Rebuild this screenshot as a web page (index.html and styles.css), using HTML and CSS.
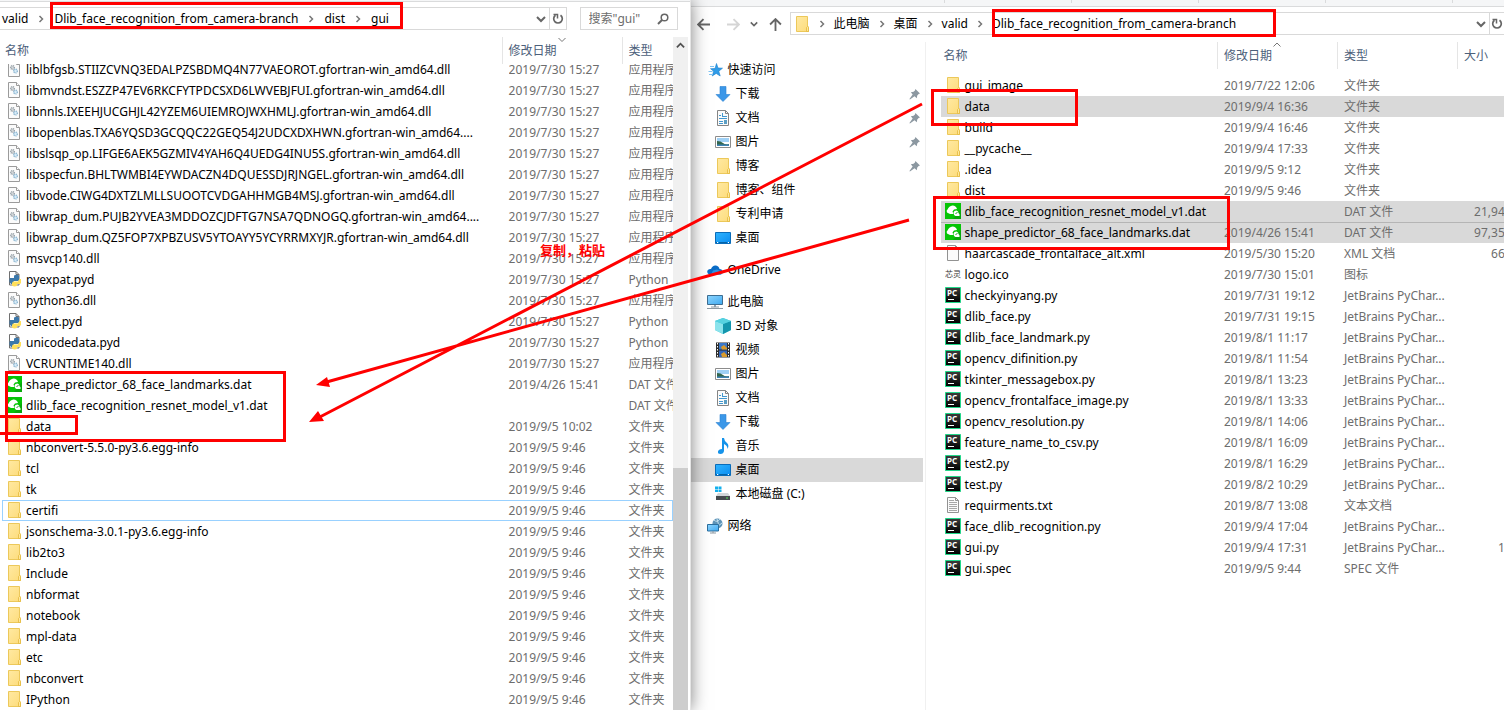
FILE: index.html
```html
<!DOCTYPE html>
<html lang="zh-CN">

<head>
  <meta charset="UTF-8">
  <meta name="viewport" content="width=device-width, initial-scale=1.0">
  <title>gui</title>
  <link rel="stylesheet" href="styles.css">
</head>

<body>
  <!-- icon sprite -->
  <svg class="sprite" aria-hidden="true">
    <defs>
      <linearGradient id="gFolder" x1="0" y1="0" x2="1" y2="1"><stop offset="0" stop-color="#ffe9a2"/><stop offset="1" stop-color="#fddc7b"/></linearGradient>
      <linearGradient id="gBlue" x1="0" y1="0" x2="1" y2="1"><stop offset="0" stop-color="#2fb4ff"/><stop offset="1" stop-color="#0a8cf0"/></linearGradient>
      <linearGradient id="gScreen" x1="0" y1="0" x2="1" y2="1"><stop offset="0" stop-color="#8fd6ff"/><stop offset="1" stop-color="#3fa9f0"/></linearGradient>
      <linearGradient id="gPc" x1="0" y1="0" x2="0" y2="1"><stop offset="0" stop-color="#3c3c3c"/><stop offset="1" stop-color="#000"/></linearGradient>
    </defs>
    <symbol id="folder" viewBox="0 0 16 16">
      <path d="M2.500.5h11v9.500l1 1v4.500h-12z" fill="url(#gFolder)" stroke="#ecc85a"/>
      <path d="M12.500 15.500v-4l1-1 1 1v4z" fill="#ffe79a" stroke="#e3b93e" stroke-width=".8"/>
    </symbol>
    <symbol id="dll" viewBox="0 0 16 16">
      <path d="M2.500.5h8l3 3v12h-11z" fill="#fbfbfb" stroke="#9b9b9b"/>
      <path d="M10.500.5v3h3" fill="#fff" stroke="#9b9b9b"/>
      <circle cx="6.500" cy="6.500" r="1.800" fill="#d5d9dc" stroke="#9aa3aa" stroke-width="1.500" stroke-dasharray="1 .6"/>
      <circle cx="9.500" cy="10" r="1.800" fill="#d9ecf8" stroke="#8db7d2" stroke-width="1.500" stroke-dasharray="1 .6"/>
    </symbol>
    <symbol id="pyd" viewBox="0 0 16 16">
      <path d="M3.500.5h6.500l3 3v10.500h-9.500z" fill="#fff" stroke="#707070"/>
      <path d="M10 .5v3h3" fill="none" stroke="#707070"/>
      <path d="M4 7h4V4.500q3-1.500 5 0V9l-1 1H8l-1 3H5L3.500 11V8z" fill="#3c78aa"/>
      <path d="M15 8v4l-1 1h-3v2q-3 1-5-.500V12l1-1.500h5L13.500 8z" fill="#ffdf5a"/>
    </symbol>
    <symbol id="dat" viewBox="0 0 16 16">
      <path d="M0 0h16v16H0z" fill="#06c406"/><path d="M8 16h8V6z" fill="#08a80b"/>
      <path d="M2 9.500Q1 7.500 2.500 6.500 4 3 7.500 2.500q3.500 0 4.500 3.500l-3 .5-1.500 2 1 2.500H5z" fill="#fff"/>
      <path d="M8.500 9.500q.5-2 3-2 2 .5 2 2.500 1.500 1 1 3h-4q-2-.5-2-3.500z" fill="#fff"/>
      <path d="M10.500 10.500l2-1" stroke="#129b20" fill="none"/>
    </symbol>
    <symbol id="page" viewBox="0 0 16 16">
      <path d="M2.500.5h8l3 3v12h-11z" fill="#fbfbfb" stroke="#929292"/><path d="M10.500.5v3h3" fill="none" stroke="#929292"/>
    </symbol>
    <symbol id="txt" viewBox="0 0 16 16">
      <path d="M2.500.5h8l3 3v12h-11z" fill="#fbfbfb" stroke="#929292"/><path d="M10.500.5v3h3" fill="none" stroke="#929292"/>
      <path d="M4 3.500h5M4 5.500h8M4 7.500h8M4 9.500h8M4 11.500h8M4 13.500h8" stroke="#a8a8a8"/>
    </symbol>
    <symbol id="doc" viewBox="0 0 16 16">
      <path d="M2.500.5h8l3 3v12h-11z" fill="#fbfbfb" stroke="#858585"/><path d="M10.500.5v3h3" fill="none" stroke="#858585"/>
      <path d="M4 5.500h2M7.500 3v4M8 6.500h4M4 8.500h8M4 11.500h4M4 13.500h4" stroke="#4298cf"/><path d="M9 10h3v4H9z" fill="#5c9fc4"/>
    </symbol>
    <symbol id="py" viewBox="0 0 16 16">
      <path d="M.5.5h15v15H.5z" fill="url(#gPc)" stroke="#21d789"/>
      <text x="2" y="9" class="pc-text">PC</text><path d="M3 12.500h6" stroke="#fff"/>
    </symbol>
    <symbol id="ico" viewBox="0 0 16 16"><text x="0" y="11" class="ico-text">芯灵</text></symbol>
    <symbol id="star" viewBox="0 0 16 16">
      <path d="M9.500 1.500l1.500 4.500 4.500.2-3.700 3 1.400 4.800-4-2.600-4 2.600 1.500-4.700-3.200-2.600 4.500-.2z" fill="#2f9ce8" stroke="#1b7fcd" stroke-width=".6"/>
      <path d="M3 4.500h4M1.500 9.500h4M2 12.500h4" stroke="#7fc3f2"/>
    </symbol>
    <symbol id="down" viewBox="0 0 16 16"><path d="M5 .5h6v8h4L8 15.500 1 8.500h4z" fill="#3b97e8" stroke="#2a7fd0" stroke-width=".6"/></symbol>
    <symbol id="pic" viewBox="0 0 16 16">
      <path d="M.5 2.500h15v11H.5z" fill="#fff" stroke="#8c8c8c"/><path d="M2 4h12v4H2z" fill="#9fd0f5"/><path d="M2 7q4 0 6 2t6 1v2H2z" fill="#33674f"/><path d="M2 10.500h12V12H2z" fill="#3e83b5"/>
    </symbol>
    <symbol id="desk" viewBox="0 0 16 16"><path d="M.5 2.500h15v11H.5z" fill="url(#gBlue)" stroke="#0a6cb9"/><path d="M1 12.500h2M4 12.500h8M13 12.500h2" stroke="#0564a8"/><path d="M2 12.500h1M13 12.500h1" stroke="#fff"/></symbol>
    <symbol id="cloud" viewBox="0 0 16 16"><path d="M2 12.500Q-.5 11 .5 8.500 1.500 6.500 4 7q1.500-4 5-3.500 3 .5 3.500 3.500 3 .2 3.200 3 0 2-2 2.500z" fill="#0a6cc6"/><path d="M4 12.500l2-4 4-1 5.500 2.500q0 2-2 2.500z" fill="#2d93e5"/></symbol>
    <symbol id="pc" viewBox="0 0 16 16"><path d="M.5 1.500h15v9H.5z" fill="url(#gScreen)" stroke="#3e6e92"/><path d="M7 11h2v2H7z" fill="#8aa3b5"/><path d="M4 13h8M0 14.500h16" stroke="#8e9aa3"/></symbol>
    <symbol id="cube" viewBox="0 0 16 16"><path d="M8 0l8 3v9l-8 4-8-4V3z" fill="#35c3d6"/><path d="M8 6v10l-8-4V3z" fill="#8be3ec"/><path d="M8 6v10l8-4V3z" fill="#1496ad"/><path d="M0 3l8-3 8 3-8 3z" fill="#57d2e0"/></symbol>
    <symbol id="video" viewBox="0 0 16 16"><path d="M1 .5h14v15H1z" fill="#2b2b2b"/><path d="M4 1h8v6.500H4z" fill="#3c78c8"/><path d="M4 8.500h8V15H4z" fill="#3566b8"/><path d="M6 5l3-2 3 3v1.500H7zM6 12l3-2 3 3v2H7z" fill="#d99a2b"/><path d="M2.500 1v14M13.500 1v14" stroke="#fff" stroke-dasharray="1.500 1.500"/></symbol>
    <symbol id="music" viewBox="0 0 16 16"><path d="M7 0h2q.3 3 3 5 2.500 2.500.5 6 0-3.500-3.500-5v7q-.5 3-3.500 3T3 13.500Q3.500 11 7 11z" fill="#1593ea"/></symbol>
    <symbol id="disk" viewBox="0 0 16 16"><path d="M0 .5h3v2.500H0zM3.500.5h3v2.500h-3zM0 3.500h3V6H0zM3.500 3.500h3V6h-3z" fill="#12b0ee"/><path d="M3 7h10l2 3H1z" fill="#d1d5d8"/><path d="M1 10h14v4H1z" fill="#454a4e"/><path d="M11 12h2" stroke="#4ee04e"/></symbol>
    <symbol id="net" viewBox="0 0 16 16"><circle cx="10.500" cy="5.500" r="5" fill="#5e94b8"/><path d="M7 2q3 3 6-1M8 7q4 2 7-2M10 1q2 4 1 9" stroke="#c5e2f0" fill="none"/><path d="M.5 6.500h11v6.500H.5z" fill="url(#gScreen)" stroke="#2b6f9f"/><path d="M3 15h6M6 13v2" stroke="#8e9aa3"/></symbol>
    <symbol id="pin" viewBox="0 0 12 12"><path d="M7 0l5 5-1.500.5L9 7l-.5 3L6 8 1 11.500.5 11 4 6 2 3.500 5 3l1.500-1.500z" fill="#8c98a1"/></symbol>
    <symbol id="chevD" viewBox="0 0 10 10"><path d="M1 3l4 4 4-4" fill="none" stroke="currentColor" stroke-width="2"/></symbol>
    <symbol id="chevR" viewBox="0 0 8 8"><path d="M2.500 1l3 3-3 3" fill="none" stroke="currentColor" stroke-width="1.500"/></symbol>
    <symbol id="thinD" viewBox="0 0 10 10"><path d="M1.500 3L5 6.500 8.500 3" fill="none" stroke="currentColor"/></symbol>
    <symbol id="thinU" viewBox="0 0 10 10"><path d="M1.500 6.500L5 3l3.500 3.500" fill="none" stroke="currentColor"/></symbol>
    <symbol id="refresh" viewBox="0 0 12 12"><path d="M8.500 2.200A4.300 4.300 0 1 1 3.500 2.200" fill="none" stroke="currentColor" stroke-width="1.700"/><path d="M1.500 1.500H5.500V5.500" fill="none" stroke="currentColor" stroke-width="1.500"/></symbol>
    <symbol id="search" viewBox="0 0 12 12"><circle cx="7.500" cy="4.500" r="3.300" fill="none" stroke="currentColor" stroke-width="1.500"/><path d="M5 7L1 11" stroke="currentColor" stroke-width="2"/></symbol>
    <symbol id="arrowL" viewBox="0 0 12 12"><path d="M6 1L1 6l5 5M1 6h11" fill="none" stroke="currentColor" stroke-width="1.700"/></symbol>
    <symbol id="arrowR" viewBox="0 0 12 12"><path d="M6 1l5 5-5 5M11 6H0" fill="none" stroke="currentColor" stroke-width="1.700"/></symbol>
    <symbol id="arrowU" viewBox="0 0 12 12"><path d="M1 6l5-5 5 5M6 1v11" fill="none" stroke="currentColor" stroke-width="1.700"/></symbol>
  </svg>

  <div class="screen">
    <!-- target window -->
    <section class="win win-left">
      <div class="ribbon"></div>
      <div class="toolbar">
        <div class="address">
          <a href="#">valid</a><svg class="sep"><use href="#chevR"/></svg>
          <a href="#">Dlib_face_recognition_from_camera-branch</a><svg class="sep"><use href="#chevR"/></svg>
          <a href="#">dist</a><svg class="sep"><use href="#chevR"/></svg>
          <a href="#">gui</a>
          <button class="drop" aria-label="历史记录"><svg><use href="#chevD"/></svg></button>
          <button class="reload" aria-label="刷新"><svg><use href="#refresh"/></svg></button>
        </div>
        <div class="search">
          <input type="text" placeholder='搜索"gui"' aria-label="搜索">
          <svg><use href="#search"/></svg>
        </div>
      </div>
      <div class="body">
        <div class="list">
          <table class="files">
            <colgroup><col><col class="c-date"><col class="c-rest"></colgroup>
            <thead>
              <tr><th>名称</th><th>修改日期<svg class="sort"><use href="#thinD"/></svg></th><th>类型</th></tr>
            </thead>
            <tbody>
              <tr class="cut"><td><div><svg><use href="#dll"/></svg>liblbfgsb.STIIZCVNQ3EDALPZSBDMQ4N77VAEOROT.gfortran-win_amd64.dll</div></td><td><div>2019/7/30 15:27</div></td><td><div>应用程序扩展</div></td></tr>
              <tr><td><svg><use href="#dll"/></svg>libmvndst.ESZZP47EV6RKCFYTPDCSXD6LWVEBJFUI.gfortran-win_amd64.dll</td><td>2019/7/30 15:27</td><td>应用程序扩展</td></tr>
              <tr><td><svg><use href="#dll"/></svg>libnnls.IXEEHJUCGHJL42YZEM6UIEMROJWXHMLJ.gfortran-win_amd64.dll</td><td>2019/7/30 15:27</td><td>应用程序扩展</td></tr>
              <tr><td><svg><use href="#dll"/></svg>libopenblas.TXA6YQSD3GCQQC22GEQ54J2UDCXDXHWN.gfortran-win_amd64....</td><td>2019/7/30 15:27</td><td>应用程序扩展</td></tr>
              <tr><td><svg><use href="#dll"/></svg>libslsqp_op.LIFGE6AEK5GZMIV4YAH6Q4UEDG4INU5S.gfortran-win_amd64.dll</td><td>2019/7/30 15:27</td><td>应用程序扩展</td></tr>
              <tr><td><svg><use href="#dll"/></svg>libspecfun.BHLTWMBI4EYWDACZN4DQUESSDJRJNGEL.gfortran-win_amd64.dll</td><td>2019/7/30 15:27</td><td>应用程序扩展</td></tr>
              <tr><td><svg><use href="#dll"/></svg>libvode.CIWG4DXTZLMLLSUOOTCVDGAHHMGB4MSJ.gfortran-win_amd64.dll</td><td>2019/7/30 15:27</td><td>应用程序扩展</td></tr>
              <tr><td><svg><use href="#dll"/></svg>libwrap_dum.PUJB2YVEA3MDDOZCJDFTG7NSA7QDNOGQ.gfortran-win_amd64....</td><td>2019/7/30 15:27</td><td>应用程序扩展</td></tr>
              <tr><td><svg><use href="#dll"/></svg>libwrap_dum.QZ5FOP7XPBZUSV5YTOAYY5YCYRRMXYJR.gfortran-win_amd64.dll</td><td>2019/7/30 15:27</td><td>应用程序扩展</td></tr>
              <tr><td><svg><use href="#dll"/></svg>msvcp140.dll</td><td>2019/7/30 15:27</td><td>应用程序扩展</td></tr>
              <tr><td><svg><use href="#pyd"/></svg>pyexpat.pyd</td><td>2019/7/30 15:27</td><td>Python</td></tr>
              <tr><td><svg><use href="#dll"/></svg>python36.dll</td><td>2019/7/30 15:27</td><td>应用程序扩展</td></tr>
              <tr><td><svg><use href="#pyd"/></svg>select.pyd</td><td>2019/7/30 15:27</td><td>Python</td></tr>
              <tr><td><svg><use href="#pyd"/></svg>unicodedata.pyd</td><td>2019/7/30 15:27</td><td>Python</td></tr>
              <tr><td><svg><use href="#dll"/></svg>VCRUNTIME140.dll</td><td>2019/7/30 15:27</td><td>应用程序扩展</td></tr>
              <tr><td><svg><use href="#dat"/></svg>shape_predictor_68_face_landmarks.dat</td><td>2019/4/26 15:41</td><td>DAT 文件</td></tr>
              <tr><td><svg><use href="#dat"/></svg>dlib_face_recognition_resnet_model_v1.dat</td><td></td><td>DAT 文件</td></tr>
              <tr><td><svg><use href="#folder"/></svg>data</td><td>2019/9/5 10:02</td><td>文件夹</td></tr>
              <tr><td><svg><use href="#folder"/></svg>nbconvert-5.5.0-py3.6.egg-info</td><td>2019/9/5 9:46</td><td>文件夹</td></tr>
              <tr><td><svg><use href="#folder"/></svg>tcl</td><td>2019/9/5 9:46</td><td>文件夹</td></tr>
              <tr><td><svg><use href="#folder"/></svg>tk</td><td>2019/9/5 9:46</td><td>文件夹</td></tr>
              <tr class="focus"><td><svg><use href="#folder"/></svg>certifi</td><td>2019/9/5 9:46</td><td>文件夹</td></tr>
              <tr><td><svg><use href="#folder"/></svg>jsonschema-3.0.1-py3.6.egg-info</td><td>2019/9/5 9:46</td><td>文件夹</td></tr>
              <tr><td><svg><use href="#folder"/></svg>lib2to3</td><td>2019/9/5 9:46</td><td>文件夹</td></tr>
              <tr><td><svg><use href="#folder"/></svg>Include</td><td>2019/9/5 9:46</td><td>文件夹</td></tr>
              <tr><td><svg><use href="#folder"/></svg>nbformat</td><td>2019/9/5 9:46</td><td>文件夹</td></tr>
              <tr><td><svg><use href="#folder"/></svg>notebook</td><td>2019/9/5 9:46</td><td>文件夹</td></tr>
              <tr><td><svg><use href="#folder"/></svg>mpl-data</td><td>2019/9/5 9:46</td><td>文件夹</td></tr>
              <tr><td><svg><use href="#folder"/></svg>etc</td><td>2019/9/5 9:46</td><td>文件夹</td></tr>
              <tr><td><svg><use href="#folder"/></svg>nbconvert</td><td>2019/9/5 9:46</td><td>文件夹</td></tr>
              <tr><td><svg><use href="#folder"/></svg>IPython</td><td>2019/9/5 9:46</td><td>文件夹</td></tr>
            </tbody>
          </table>
        </div>
        <div class="scrollbar">
          <button aria-label="向上滚动"><svg><use href="#chevD"/></svg></button>
          <div class="thumb"></div>
        </div>
      </div>
    </section>

    <!-- source window -->
    <section class="win win-right">
      <div class="ribbon"><i></i><i></i><i></i><i></i><i></i></div>
      <div class="toolbar">
        <div class="history">
          <button aria-label="后退"><svg><use href="#arrowL"/></svg></button>
          <button aria-label="前进" disabled><svg><use href="#arrowR"/></svg></button>
          <button class="recent" aria-label="最近位置"><svg><use href="#chevD"/></svg></button>
          <button aria-label="上移"><svg><use href="#arrowU"/></svg></button>
        </div>
        <div class="address">
          <svg class="root"><use href="#folder"/></svg><svg class="sep"><use href="#chevR"/></svg>
          <a href="#">此电脑</a><svg class="sep"><use href="#chevR"/></svg>
          <a href="#">桌面</a><svg class="sep"><use href="#chevR"/></svg>
          <a href="#">valid</a><svg class="sep"><use href="#chevR"/></svg>
          <a href="#">Dlib_face_recognition_from_camera-branch</a>
          <button class="drop" aria-label="历史记录"><svg><use href="#chevD"/></svg></button>
          <button class="reload" aria-label="刷新"><svg><use href="#refresh"/></svg></button>
        </div>
      </div>
      <div class="body">
        <nav class="tree">
          <ul>
            <li class="top"><svg><use href="#star"/></svg>快速访问</li>
            <li><svg><use href="#down"/></svg>下载<svg class="pin"><use href="#pin"/></svg></li>
            <li><svg><use href="#doc"/></svg>文档<svg class="pin"><use href="#pin"/></svg></li>
            <li><svg><use href="#pic"/></svg>图片<svg class="pin"><use href="#pin"/></svg></li>
            <li><svg><use href="#folder"/></svg>博客<svg class="pin"><use href="#pin"/></svg></li>
            <li><svg><use href="#folder"/></svg>博客、组件</li>
            <li><svg><use href="#folder"/></svg>专利申请</li>
            <li><svg><use href="#desk"/></svg>桌面</li>
          </ul>
          <ul>
            <li class="top"><svg><use href="#cloud"/></svg>OneDrive</li>
          </ul>
          <ul>
            <li class="top"><svg><use href="#pc"/></svg>此电脑</li>
            <li><svg><use href="#cube"/></svg>3D 对象</li>
            <li><svg><use href="#video"/></svg>视频</li>
            <li><svg><use href="#pic"/></svg>图片</li>
            <li><svg><use href="#doc"/></svg>文档</li>
            <li><svg><use href="#down"/></svg>下载</li>
            <li><svg><use href="#music"/></svg>音乐</li>
            <li class="on"><svg><use href="#desk"/></svg>桌面</li>
            <li><svg><use href="#disk"/></svg>本地磁盘 (C:)</li>
          </ul>
          <ul>
            <li class="top"><svg><use href="#net"/></svg>网络</li>
          </ul>
        </nav>
        <div class="list">
          <table class="files">
            <colgroup><col><col class="c-date"><col class="c-type"><col class="c-size"></colgroup>
            <thead>
              <tr><th>名称</th><th>修改日期<svg class="sort"><use href="#thinU"/></svg></th><th>类型</th><th>大小</th></tr>
            </thead>
            <tbody>
              <tr><td><svg><use href="#folder"/></svg>gui_image</td><td>2019/7/22 12:06</td><td>文件夹</td><td></td></tr>
              <tr class="on"><td><svg><use href="#folder"/></svg>data</td><td>2019/9/4 16:36</td><td>文件夹</td><td></td></tr>
              <tr><td><svg><use href="#folder"/></svg>build</td><td>2019/9/4 16:46</td><td>文件夹</td><td></td></tr>
              <tr><td><svg><use href="#folder"/></svg>__pycache__</td><td>2019/9/4 17:33</td><td>文件夹</td><td></td></tr>
              <tr><td><svg><use href="#folder"/></svg>.idea</td><td>2019/9/5 9:12</td><td>文件夹</td><td></td></tr>
              <tr><td><svg><use href="#folder"/></svg>dist</td><td>2019/9/5 9:46</td><td>文件夹</td><td></td></tr>
              <tr class="on"><td><svg><use href="#dat"/></svg>dlib_face_recognition_resnet_model_v1.dat</td><td></td><td>DAT 文件</td><td>21,940 KB</td></tr>
              <tr class="on joined"><td><svg><use href="#dat"/></svg>shape_predictor_68_face_landmarks.dat</td><td>2019/4/26 15:41</td><td>DAT 文件</td><td>97,354 KB</td></tr>
              <tr><td><svg><use href="#page"/></svg>haarcascade_frontalface_alt.xml</td><td>2019/5/30 15:20</td><td>XML 文档</td><td>661 KB</td></tr>
              <tr><td><svg><use href="#ico"/></svg>logo.ico</td><td>2019/7/30 15:01</td><td>图标</td><td>2 KB</td></tr>
              <tr><td><svg><use href="#py"/></svg>checkyinyang.py</td><td>2019/7/31 19:12</td><td>JetBrains PyChar...</td><td>4 KB</td></tr>
              <tr><td><svg><use href="#py"/></svg>dlib_face.py</td><td>2019/7/31 19:15</td><td>JetBrains PyChar...</td><td>4 KB</td></tr>
              <tr><td><svg><use href="#py"/></svg>dlib_face_landmark.py</td><td>2019/8/1 11:17</td><td>JetBrains PyChar...</td><td>3 KB</td></tr>
              <tr><td><svg><use href="#py"/></svg>opencv_difinition.py</td><td>2019/8/1 11:54</td><td>JetBrains PyChar...</td><td>1 KB</td></tr>
              <tr><td><svg><use href="#py"/></svg>tkinter_messagebox.py</td><td>2019/8/1 13:23</td><td>JetBrains PyChar...</td><td>1 KB</td></tr>
              <tr><td><svg><use href="#py"/></svg>opencv_frontalface_image.py</td><td>2019/8/1 13:33</td><td>JetBrains PyChar...</td><td>1 KB</td></tr>
              <tr><td><svg><use href="#py"/></svg>opencv_resolution.py</td><td>2019/8/1 14:06</td><td>JetBrains PyChar...</td><td>1 KB</td></tr>
              <tr><td><svg><use href="#py"/></svg>feature_name_to_csv.py</td><td>2019/8/1 16:09</td><td>JetBrains PyChar...</td><td>4 KB</td></tr>
              <tr><td><svg><use href="#py"/></svg>test2.py</td><td>2019/8/1 16:29</td><td>JetBrains PyChar...</td><td>1 KB</td></tr>
              <tr><td><svg><use href="#py"/></svg>test.py</td><td>2019/8/2 10:29</td><td>JetBrains PyChar...</td><td>2 KB</td></tr>
              <tr><td><svg><use href="#txt"/></svg>requirments.txt</td><td>2019/8/7 13:08</td><td>文本文档</td><td>1 KB</td></tr>
              <tr><td><svg><use href="#py"/></svg>face_dlib_recognition.py</td><td>2019/9/4 17:04</td><td>JetBrains PyChar...</td><td>6 KB</td></tr>
              <tr><td><svg><use href="#py"/></svg>gui.py</td><td>2019/9/4 17:31</td><td>JetBrains PyChar...</td><td>13 KB</td></tr>
              <tr><td><svg><use href="#py"/></svg>gui.spec</td><td>2019/9/5 9:44</td><td>SPEC 文件</td><td>2 KB</td></tr>
            </tbody>
          </table>
        </div>
      </div>
    </section>

    <!-- red marks drawn over both windows -->
    <svg class="marks">
      <g class="boxes">
        <rect x="51.500" y="3.500" width="350" height="24"/>
        <rect x="993.500" y="10.500" width="281" height="25"/>
        <rect x="932.500" y="90.500" width="144" height="34"/>
        <rect x="934.500" y="197.500" width="294" height="51"/>
        <rect x="6.500" y="372.500" width="278" height="68"/>
        <rect x="-4" y="416.500" width="80.500" height="17"/>
      </g>
      <path class="line" d="M922 104L316 419M909 220L323 383"/>
      <path class="head" d="M309 422l9-11 6 10zM316 385l11-8 3 10z"/>
      <text x="540" y="255">复制，粘贴</text>
    </svg>
  </div>
</body>

</html>
```
FILE: styles.css
```css
* {
  margin: 0;
  padding: 0;
  box-sizing: border-box;
}

body {
  background: #fff;
  color: #000;
  font: 12px/16px "Noto Sans", "Noto Sans CJK SC", sans-serif;
}

ul {
  list-style: none;
}

a {
  color: inherit;
  text-decoration: none;
}

button {
  border: 0;
  background: none;
  color: inherit;
  font: inherit;
}

.sprite {
  position: absolute;
  width: 0;
  height: 0;
}

.pc-text {
  font: bold 8px "Noto Sans", sans-serif;
  fill: #fff;
}

.ico-text {
  font: 8px "Noto Sans CJK SC", sans-serif;
  fill: #333;
}

.screen {
  position: relative;
  display: flex;
  height: 100vh;
  overflow: hidden;
}

.win {
  display: flex;
  flex-direction: column;
  min-width: 0;
  background: #fff;
}

.win-left {
  flex: 690 1 0;
  z-index: 1;
  border-right: 1px solid #e4e4e4;
  box-shadow: 0 0 16px rgba(0, 0, 0, .5);
}

.win-right {
  flex: 814 1 0;
}

.ribbon {
  display: flex;
  flex: none;
  height: 2px;
  background: #f5f6f7;
  border-bottom: 1px solid #dadbdc;
}

.win-right .ribbon {
  height: 7px;
}

/* group dividers of the ribbon above */
.ribbon i {
  width: 127px;
  height: 3px;
  border-right: 1px solid #dadbdc;
}

.ribbon i:first-child {
  width: 254px;
}

/* address bar */
.toolbar {
  display: flex;
  flex: none;
  gap: 13px;
  padding: 5px 12px 7px 0;
}

.win-right .toolbar {
  gap: 8px;
  padding: 5px 0 7px 6px;
}

.address {
  display: flex;
  flex: 1;
  align-items: center;
  height: 23px;
  padding-left: 2px;
  border: 1px solid #d9d9d9;
}

.win-left .address {
  border-left: 0;
}

.win-right .address {
  border-right: 0;
  padding-left: 3px;
}

.address .sep {
  width: 8px;
  height: 8px;
  margin: 0 8px;
  color: #777;
}

.win-left .sep {
  margin: 0 9px;
}

.address .root {
  width: 16px;
  height: 16px;
}

.drop {
  width: 16px;
  height: 21px;
  margin-left: auto;
  color: #666;
}

.reload {
  width: 17px;
  height: 21px;
  border-left: 1px solid #d9d9d9;
  color: #666;
}

.win-right .reload {
  width: 15px;
  overflow: hidden;
}

.drop svg {
  width: 10px;
  height: 10px;
  vertical-align: middle;
}

.reload svg {
  width: 12px;
  height: 12px;
  vertical-align: middle;
}

.search {
  display: flex;
  align-items: center;
  width: 98px;
  height: 23px;
  padding: 0 8px;
  border: 1px solid #d9d9d9;
  color: #666;
}

.search input {
  flex: 1;
  min-width: 0;
  border: 0;
  background: none;
  font: inherit;
}

.search input::placeholder {
  color: #6d6d6d;
}

.search svg {
  width: 12px;
  height: 12px;
}

.history {
  display: flex;
  align-items: center;
  gap: 8px;
  color: #666;
}

.history button {
  width: 13px;
  height: 16px;
}

.history button:disabled {
  margin-left: 9px;
  color: #d5d5d5;
}

.history svg {
  width: 13px;
  height: 13px;
  vertical-align: middle;
}

.history .recent svg {
  width: 8px;
  height: 8px;
}

/* file lists */
.body {
  display: flex;
  flex: 1;
  min-height: 0;
}

.list {
  flex: 1;
  min-width: 0;
  overflow: hidden;
  padding-left: 2px;
}

.win-right .list {
  padding-left: 15px;
}

.files {
  width: 100%;
  border-collapse: separate;
  border-spacing: 0;
  table-layout: fixed;
}

/* the size column runs on past the window edge */
.win-right .files {
  width: calc(100% + 33px);
}

.c-date,
.c-type {
  width: 120px;
}

.c-rest {
  width: 51px;
}

.c-size {
  width: 80px;
}

.files th {
  position: relative;
  height: 27px;
  padding-left: 3px;
  color: #4c607a;
  font-weight: normal;
  line-height: 27px;
  text-align: left;
}

.files th + th {
  padding-left: 6px;
  border-left: 1px solid #e5e5e5;
}

.files .sort {
  position: absolute;
  top: -2px;
  left: 54px;
  width: 10px;
  height: 10px;
  color: #777;
}

.files td {
  height: 21px;
  padding-left: 7px;
  overflow: hidden;
  color: #6d6d6d;
  line-height: 21px;
  white-space: nowrap;
}

.files td:first-child {
  padding-left: 4px;
  color: #000;
}

.files td:nth-child(4) {
  padding: 0 7px 0 0;
  text-align: right;
}

.files td svg {
  width: 16px;
  height: 16px;
  margin: 2px 4px 0 0;
  vertical-align: top;
}

/* first row is scrolled halfway under the header */
.files .cut td {
  height: 16px;
}

.files .cut div {
  display: flex;
  align-items: flex-end;
  height: 16px;
  overflow: hidden;
}

.files .cut svg {
  margin-bottom: 3px;
}

.files .focus {
  outline: 1px solid #99d1ff;
  outline-offset: -1px;
}

.files .on td {
  background: #d9d9d9;
}

.files .joined td {
  box-shadow: inset 0 1px #b5b5b5;
}

.win-right .files tbody::before {
  content: "";
  display: block;
  height: 6px;
}

.scrollbar {
  display: flex;
  flex-direction: column;
  width: 17px;
  border-right: 2px solid #fff;
  background: #f0f0f0;
  color: #505050;
}

.scrollbar button {
  height: 17px;
}

.scrollbar button svg {
  width: 9px;
  height: 9px;
  transform: rotate(180deg);
}

.scrollbar .thumb {
  height: 36%;
  margin-top: auto;
  background: #cdcdcd;
}

/* navigation pane */
.tree {
  width: 235px;
  padding: 16px 2px 0 0;
  border-right: 1px solid #f0f0f0;
}

.tree ul {
  margin-bottom: 8px;
}

.tree li {
  display: flex;
  align-items: center;
  gap: 5px;
  height: 24px;
  padding: 0 3px 0 24px;
}

.tree .top {
  padding-left: 16px;
}

.tree .on {
  background: #d9d9d9;
}

.tree svg {
  width: 16px;
  height: 16px;
}

.tree .pin {
  width: 11px;
  height: 11px;
  margin-left: auto;
}

/* marks */
.marks {
  position: absolute;
  top: 0;
  left: 0;
  z-index: 2;
  width: 100%;
  height: 100%;
  pointer-events: none;
}

.boxes,
.line {
  fill: none;
  stroke: #f00;
  stroke-width: 3px;
}

.head {
  fill: #f00;
}

.marks text {
  fill: #f00;
  font: bold 13px "Noto Sans CJK SC", sans-serif;
}
```
